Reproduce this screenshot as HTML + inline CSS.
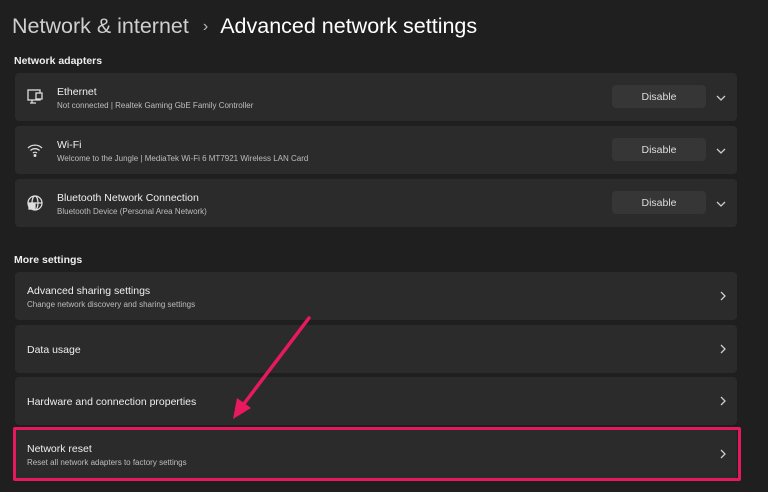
<!DOCTYPE html>
<html><head><meta charset="utf-8"><style>
*{margin:0;padding:0;box-sizing:border-box}
body{width:768px;height:492px;background:#1f1f1f;font-family:"Liberation Sans",sans-serif;color:#fff;position:relative;overflow:hidden}
.t{position:absolute;top:14px;left:12px;font-size:21.5px;white-space:nowrap}
.t .a{color:#cfcfcf}.t .s{color:#bbb;margin:0 12px 0 14px;font-size:16px;position:relative;top:-2px}
.h{position:absolute;left:14px;font-size:10.5px;font-weight:bold;color:#eee}
.c{position:absolute;left:15px;width:722px;height:48px;background:#2b2b2b;border-radius:4px}
.c .n{position:absolute;left:42px;top:13px;font-size:10.5px;color:#f0f0f0}
.c .d{position:absolute;left:42px;top:28px;font-size:8px;color:#bdbdbd}
.c .n1{left:12px}.c .d1{left:12px}
.c .o{position:absolute;left:12px;top:1px;line-height:48px;font-size:10.5px;color:#eee}
.b{position:absolute;left:597px;top:12px;width:94px;height:23px;background:#363636;border-radius:4px;font-size:10.5px;color:#ddd;text-align:center;line-height:25px}
.v{position:absolute;left:700px;top:19px}
.r{position:absolute;left:702px;top:18px}
.ic{position:absolute;left:11px;top:15px}
</style></head><body>
<div class="t"><span class="a">Network &amp; internet</span><span class="s">›</span><span style="color:#fff">Advanced network settings</span></div>
<div class="h" style="top:55px">Network adapters</div>
<div class="c" style="top:73px">
<svg class="ic" width="18" height="18" viewBox="0 0 18 18" fill="none" stroke="#ddd" stroke-width="1.3"><rect x="2" y="2" width="12" height="10"/><rect x="10" y="5" width="6" height="6" fill="#2b2b2b"/><path d="M6 12v3M4 15h6"/></svg>
<div class="n">Ethernet</div><div class="d">Not connected | Realtek Gaming GbE Family Controller</div>
<div class="b">Disable</div><svg class="v" width="12" height="12" viewBox="0 0 12 12"><path d="M2 4l4 4 4-4" stroke="#ccc" stroke-width="1.3" fill="none"/></svg></div>
<div class="c" style="top:126px">
<svg class="ic" width="18" height="18" viewBox="0 0 18 18" fill="none" stroke="#ddd" stroke-width="1.3"><path d="M2 7a10 10 0 0 1 14 0M4.5 9.5a6.5 6.5 0 0 1 9 0M7 12a3 3 0 0 1 4 0"/><circle cx="9" cy="14.5" r="0.8" fill="#ddd"/></svg>
<div class="n">Wi-Fi</div><div class="d">Welcome to the Jungle | MediaTek Wi-Fi 6 MT7921 Wireless LAN Card</div>
<div class="b">Disable</div><svg class="v" width="12" height="12" viewBox="0 0 12 12"><path d="M2 4l4 4 4-4" stroke="#ccc" stroke-width="1.3" fill="none"/></svg></div>
<div class="c" style="top:179px">
<svg class="ic" width="18" height="18" viewBox="0 0 18 18" fill="none" stroke="#ddd" stroke-width="1.3"><circle cx="9" cy="9" r="7"/><ellipse cx="9" cy="9" rx="3" ry="7"/><path d="M2 9h14"/><rect x="3" y="10" width="6" height="5" fill="#ddd"/></svg>
<div class="n">Bluetooth Network Connection</div><div class="d">Bluetooth Device (Personal Area Network)</div>
<div class="b">Disable</div><svg class="v" width="12" height="12" viewBox="0 0 12 12"><path d="M2 4l4 4 4-4" stroke="#ccc" stroke-width="1.3" fill="none"/></svg></div>
<div class="h" style="top:254px">More settings</div>
<div class="c" style="top:272px"><div class="n n1">Advanced sharing settings</div><div class="d d1">Change network discovery and sharing settings</div><svg class="r" width="12" height="12" viewBox="0 0 12 12"><path d="M4 2l4 4-4 4" stroke="#ccc" stroke-width="1.3" fill="none"/></svg></div>
<div class="c" style="top:325px"><div class="o">Data usage</div><svg class="r" width="12" height="12" viewBox="0 0 12 12"><path d="M4 2l4 4-4 4" stroke="#ccc" stroke-width="1.3" fill="none"/></svg></div>
<div class="c" style="top:377px"><div class="o">Hardware and connection properties</div><svg class="r" width="12" height="12" viewBox="0 0 12 12"><path d="M4 2l4 4-4 4" stroke="#ccc" stroke-width="1.3" fill="none"/></svg></div>
<div class="c" style="top:428px;height:52px"><div class="n n1" style="top:15px">Network reset</div><div class="d d1" style="top:30px">Reset all network adapters to factory settings</div><svg class="r" width="12" height="12" viewBox="0 0 12 12" style="top:20px"><path d="M4 2l4 4-4 4" stroke="#ccc" stroke-width="1.3" fill="none"/></svg></div>
<div style="position:absolute;left:13px;top:427px;width:728px;height:54px;border:3px solid #e5195e;border-radius:2px"></div>
<svg style="position:absolute;left:0;top:0" width="768" height="492"><path d="M309 318L240 409" stroke="#e8195f" stroke-width="3.5" stroke-linecap="round"/><path d="M233 419L237 398L251 408Z" fill="#e8195f"/></svg>
</body></html>
